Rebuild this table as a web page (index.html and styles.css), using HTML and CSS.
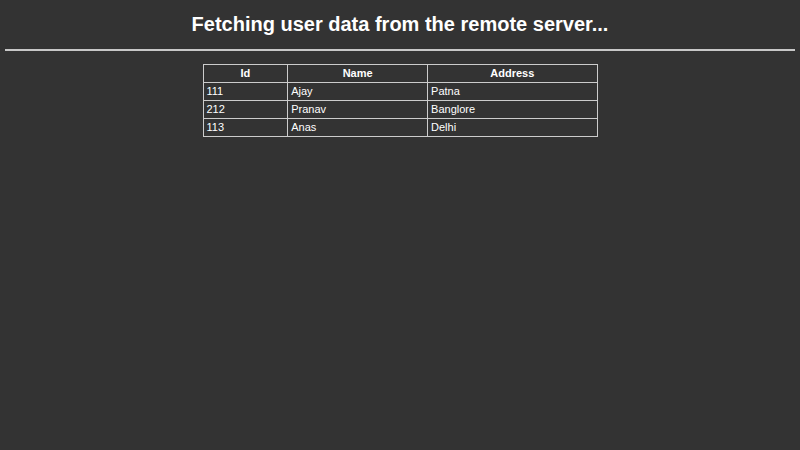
FILE: index.html
```html
<!DOCTYPE html>
<html>
<head>
<meta charset="utf-8">
<link rel="stylesheet" href="styles.css">
</head>
<body>
<h1 class="title">Fetching user data from the remote server...</h1>
<hr class="rule">
<table class="users">
<thead>
<tr><th class="c-id">Id</th><th class="c-name">Name</th><th>Address</th></tr>
</thead>
<tbody>
<tr><td>111</td><td>Ajay</td><td>Patna</td></tr>
<tr><td>212</td><td>Pranav</td><td>Banglore</td></tr>
<tr><td>113</td><td>Anas</td><td>Delhi</td></tr>
</tbody>
</table>
</body>
</html>
```
FILE: styles.css
```css
html, body {
  background: #333333;
}
body {
  margin: 5px;
  color: #ffffff;
  font-family: "Liberation Sans", Arial, sans-serif;
}
.title {
  text-align: center;
  font-size: 20px;
  font-weight: bold;
  margin: 0;
  padding: 7px 0 0;
  line-height: 24px;
}
.rule {
  border: none;
  border-top: 2px solid #c8c8c8;
  margin: 13px 0 13px;
  height: 0;
}
.users {
  width: 50%;
  margin: 0 auto;
  border-collapse: collapse;
  font-size: 11px;
}
.users th, .users td {
  border: 1px solid #cccccc;
  padding: 2px 3px;
  height: 13px;
  line-height: 13px;
  text-align: left;
}
.users th {
  text-align: center;
}
.c-id { width: 21.5%; }
.c-name { width: 35.5%; }
```
